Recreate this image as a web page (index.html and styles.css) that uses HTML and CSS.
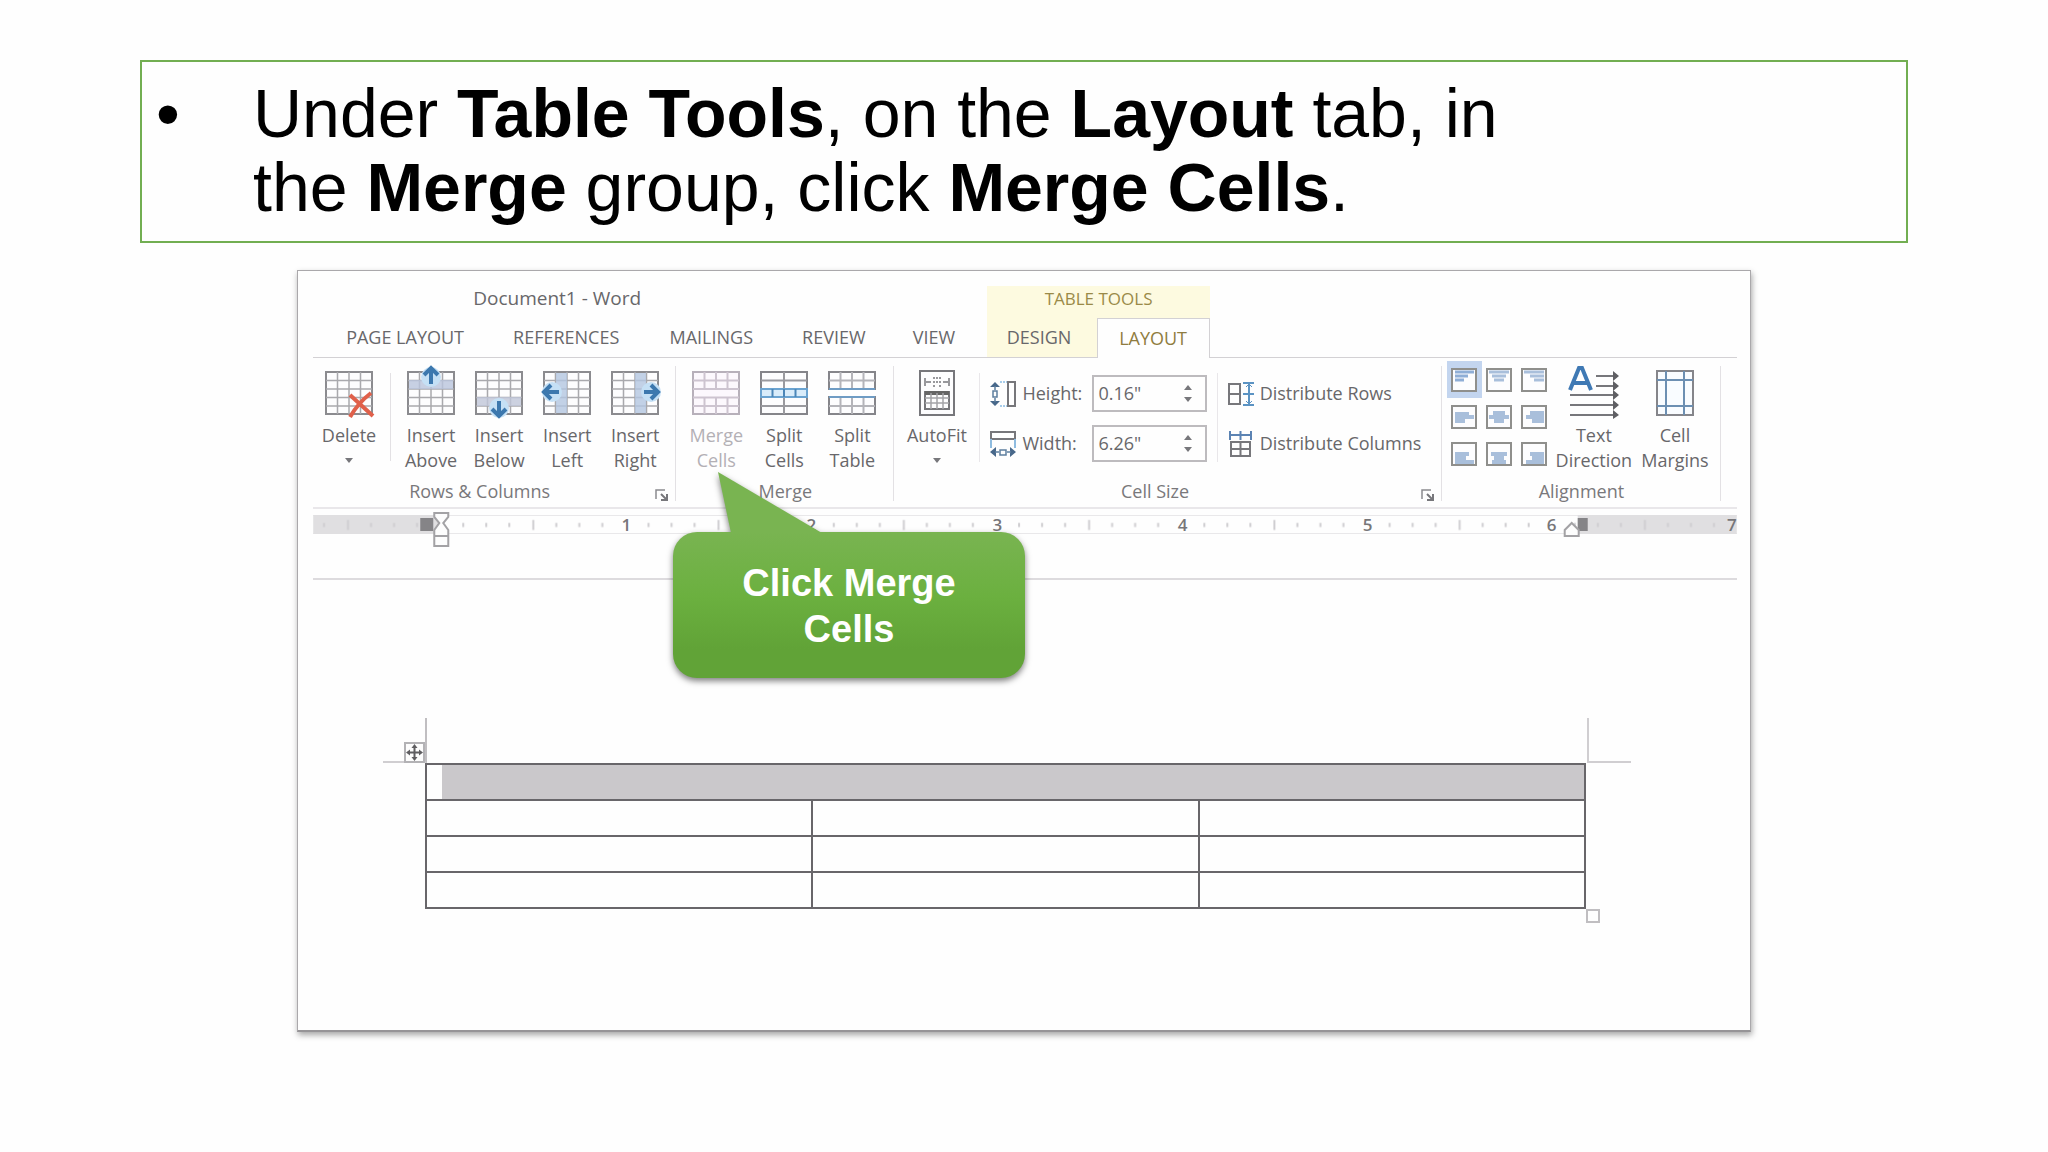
FILE: index.html
```html
<!DOCTYPE html>
<html lang="en">
<head>
<meta charset="utf-8">
<title>Merge Cells</title>
<link rel="stylesheet" href="styles.css">
</head>
<body>
<svg class="defs" aria-hidden="true">
  <defs>
    <symbol id="grid" viewBox="0 0 54 54">
      <path d="M4 7H50V49H4Z" fill="#fdfdfe" stroke="#8b8b8f" stroke-width="2"/>
      <path d="M4 15.500H50M4 24H50M4 32.500H50M4 41H50M15.500 7V49M27 7V49M38.500 7V49" stroke="#a9a9ad" stroke-width="1.500" fill="none"/>
    </symbol>
    <symbol id="launcher" viewBox="0 0 14 14">
      <path d="M1 11V2H10" stroke="#8a8a8e" stroke-width="1.500" fill="none"/>
      <path d="M6 6L11 11M12 6V12H6" stroke="#77777b" stroke-width="2" fill="none"/>
    </symbol>
    <symbol id="spin" viewBox="0 0 10 6"><path d="M1 6L5 1L9 6Z" fill="#77777b"/></symbol>
    <symbol id="frame" viewBox="0 0 26 24"><path d="M1 1H25V23H1Z" fill="#fdfdfe" stroke="#8f8f8c" stroke-width="2"/></symbol>
  </defs>
</svg>
<main class="slide">
  <ul class="instruction">
    <li>Under <b>Table Tools</b>, on the <b>Layout</b> tab, in<br>the <b>Merge</b> group, click <b>Merge Cells</b>.</li>
  </ul>

  <section class="window">
    <nav class="tabs">
      <span class="doc-title">Document1 - Word</span>
      <span class="context-title">TABLE TOOLS</span>
      <button class="tab">PAGE LAYOUT</button>
      <button class="tab">REFERENCES</button>
      <button class="tab">MAILINGS</button>
      <button class="tab">REVIEW</button>
      <button class="tab">VIEW</button>
      <button class="tab tab-context">DESIGN</button>
      <button class="tab tab-active">LAYOUT</button>
      <span class="tab-rest"></span>
    </nav>

    <div class="ribbon">
      <section class="group">
        <div class="group-body rows-columns">
          <button class="tool">
            <svg class="icon" viewBox="0 0 54 54"><use href="#grid"/><path d="M28 30L51 51M49 28Q36 38 28 52" stroke="#e0604a" stroke-width="4" fill="none"/></svg>
            <span>Delete</span><svg class="caret" viewBox="0 0 10 6"><path d="M1 0H9L5 5Z" fill="#77777b"/></svg>
          </button>
          <span class="divider"></span>
          <button class="tool">
            <svg class="icon" viewBox="0 0 54 54"><use href="#grid"/><path d="M5 15H49V24H5Z" fill="#b9c4dc" opacity=".8"/><circle cx="27" cy="12" r="10" fill="#c5e0f5"/><path d="M27 19V4M20 10L27 3L34 10" stroke="#3c78ae" stroke-width="4" fill="none"/></svg>
            <span>Insert<br>Above</span>
          </button>
          <button class="tool">
            <svg class="icon" viewBox="0 0 54 54"><use href="#grid"/><path d="M5 32H49V41H5Z" fill="#bfc5d8" opacity=".8"/><circle cx="27" cy="43" r="10" fill="#c5e0f5"/><path d="M27 36V51M20 44L27 51L34 44" stroke="#3c78ae" stroke-width="4" fill="none"/></svg>
            <span>Insert<br>Below</span>
          </button>
          <button class="tool">
            <svg class="icon" viewBox="0 0 54 54"><use href="#grid"/><path d="M16 8H27V48H16Z" fill="#b3c6e0" opacity=".8"/><circle cx="12" cy="27" r="10" fill="#c5e0f5"/><path d="M19 27H4M11 20L4 27L11 34" stroke="#3c78ae" stroke-width="4" fill="none"/></svg>
            <span>Insert<br>Left</span>
          </button>
          <button class="tool">
            <svg class="icon" viewBox="0 0 54 54"><use href="#grid"/><path d="M27 8H38V48H27Z" fill="#b3c6e0" opacity=".8"/><circle cx="43" cy="27" r="10" fill="#c5e0f5"/><path d="M36 27H51M43 20L50 27L43 34" stroke="#3c78ae" stroke-width="4" fill="none"/></svg>
            <span>Insert<br>Right</span>
          </button>
        </div>
        <h2 class="group-label label-left">Rows &amp; Columns</h2>
        <button class="launch" aria-label="Table properties"><svg viewBox="0 0 14 14"><use href="#launcher"/></svg></button>
      </section>

      <section class="group">
        <div class="group-body merge">
          <button class="tool" disabled>
            <svg class="icon" viewBox="0 0 54 54"><path d="M4 7H50V49H4Z" fill="#fcf8fd" stroke="#b7b0ba" stroke-width="2"/><path d="M4 15.500H50M4 24H50M4 32.500H50M4 41H50M15.500 7V24M27 7V24M38.500 7V24M15.500 33V49M27 33V49M38.500 33V49" stroke="#cdc4d0" stroke-width="2" fill="none"/></svg>
            <span>Merge<br>Cells</span>
          </button>
          <button class="tool">
            <svg class="icon" viewBox="0 0 54 54"><path d="M4 7H50V49H4Z" fill="#fdfdfe" stroke="#85858a" stroke-width="2"/><path d="M4 15.500H50M4 41H50M27 7V49" stroke="#9a9a9f" stroke-width="2" fill="none"/><path d="M4 24H50V32H4Z" fill="#d9ecfa" stroke="#6ba3d0" stroke-width="2"/><path d="M15.500 24V32M27 24V32M38.500 24V32" stroke="#4b86b8" stroke-width="2"/></svg>
            <span>Split<br>Cells</span>
          </button>
          <button class="tool">
            <svg class="icon" viewBox="0 0 54 54"><path d="M4 7H50V24H4ZM4 32H50V49H4Z" fill="#fdfdfe" stroke="#85858a" stroke-width="2"/><path d="M4 15.500H50M4 41H50M15.500 7V24M27 7V24M38.500 7V24M15.500 32V49M27 32V49M38.500 32V49" stroke="#b4b4b9" stroke-width="2" fill="none"/><path d="M4 24H50M4 32H50" stroke="#6f9cc4" stroke-width="2"/></svg>
            <span>Split<br>Table</span>
          </button>
        </div>
        <h2 class="group-label">Merge</h2>
      </section>

      <section class="group">
        <div class="group-body cell-size">
          <button class="tool">
            <svg class="icon" viewBox="0 0 54 54"><path d="M10 6H44V50H10Z" fill="#fdfdfe" stroke="#77777b" stroke-width="2"/><path d="M15 13V21M39 13V21M15 17H21M33 17H39M24 12V14M27 12V14M30 12V14M24 16V18M27 16V18M30 16V18M24 20V22M30 20V22" stroke="#98989c" stroke-width="2"/><path d="M15 27H39V44H15Z" fill="none" stroke="#77777b" stroke-width="2"/><path d="M15 28H39" stroke="#666" stroke-width="4"/><path d="M15 33H39M15 38H39M21 28V44M27 28V44M33 28V44" stroke="#a4a4a8" stroke-width="1.500"/></svg>
            <span>AutoFit</span><svg class="caret" viewBox="0 0 10 6"><path d="M1 0H9L5 5Z" fill="#77777b"/></svg>
          </button>
          <div class="fields">
            <div class="field">
              <svg class="mini" viewBox="0 0 26 26"><path d="M18 1H25V25H18Z" fill="#fff" stroke="#77777b" stroke-width="2"/><path d="M10 1H17M10 25H17" stroke="#a8cdea" stroke-width="2" stroke-dasharray="2 1"/><path d="M5 1L10 6H0ZM5 25L10 20H0Z" fill="#48688a"/><path d="M5 5V9M5 17V21M3 10H7V16H3Z" stroke="#5d7f9f" stroke-width="1.500" fill="none"/></svg>
              <label for="h">Height:</label>
              <span class="spinner"><input id="h" type="text" value='0.16"'><span class="arrows"><button aria-label="Increase height"><svg viewBox="0 0 10 6"><use href="#spin"/></svg></button><button class="down" aria-label="Decrease height"><svg viewBox="0 0 10 6"><use href="#spin"/></svg></button></span></span>
            </div>
            <div class="field">
              <svg class="mini" viewBox="0 0 26 26"><path d="M1 1H25V8H1Z" fill="#fff" stroke="#77777b" stroke-width="2"/><path d="M1 8V17M25 8V17" stroke="#8fbce0" stroke-width="2"/><path d="M0 21L6 16V26ZM26 21L20 16V26Z" fill="#48688a"/><path d="M5 21H9M17 21H21M10 19H16V24H10Z" stroke="#5d7f9f" stroke-width="1.500" fill="none"/></svg>
              <label for="w">Width:</label>
              <span class="spinner"><input id="w" type="text" value='6.26"'><span class="arrows"><button aria-label="Increase width"><svg viewBox="0 0 10 6"><use href="#spin"/></svg></button><button class="down" aria-label="Decrease width"><svg viewBox="0 0 10 6"><use href="#spin"/></svg></button></span></span>
            </div>
          </div>
          <div class="fields">
            <button class="wide-tool">
              <svg class="mini" viewBox="0 0 26 26"><path d="M1 3H12V23H1ZM1 13H12" fill="none" stroke="#77777b" stroke-width="2"/><path d="M15 2H26M15 13H26M15 24H26M21 3V23" stroke="#5b93c3" stroke-width="2"/><path d="M18 6L21 3L24 6M18 20L21 23L24 20" stroke="#5b93c3" fill="none"/></svg>
              Distribute Rows
            </button>
            <button class="wide-tool">
              <svg class="mini" viewBox="0 0 26 26"><path d="M3 11H22V25H3ZM3 18H22M12.500 11V25" fill="none" stroke="#77777b" stroke-width="2"/><path d="M2 0V9M12.500 0V9M23 0V9M2 4H23" stroke="#5b83b3" stroke-width="2"/></svg>
              Distribute Columns
            </button>
          </div>
        </div>
        <h2 class="group-label label-size">Cell Size</h2>
        <button class="launch" aria-label="Cell size options"><svg viewBox="0 0 14 14"><use href="#launcher"/></svg></button>
      </section>

      <section class="group">
        <div class="group-body alignment">
          <div class="align-grid">
            <button class="selected" aria-label="Top left"><svg viewBox="0 0 26 24"><use href="#frame"/><path d="M4 4H23M4 8H17M4 12H13" stroke="#8faed6" stroke-width="3"/></svg></button>
            <button aria-label="Top center"><svg viewBox="0 0 26 24"><use href="#frame"/><path d="M3 4H23M6 8H20M8 12H18" stroke="#a9bfdb" stroke-width="3"/></svg></button>
            <button aria-label="Top right"><svg viewBox="0 0 26 24"><use href="#frame"/><path d="M3 4H23M9 8H23M13 12H23" stroke="#a9bfdb" stroke-width="3"/></svg></button>
            <button aria-label="Middle left"><svg viewBox="0 0 26 24"><use href="#frame"/><path d="M4 9H18M4 12H23M4 16H14" stroke="#a9bfdb" stroke-width="4"/></svg></button>
            <button aria-label="Middle center"><svg viewBox="0 0 26 24"><use href="#frame"/><path d="M7 8H19M3 12H23M8 16H18" stroke="#a9bfdb" stroke-width="4"/></svg></button>
            <button aria-label="Middle right"><svg viewBox="0 0 26 24"><use href="#frame"/><path d="M9 8H23M5 12H23M11 16H23" stroke="#a9bfdb" stroke-width="4"/></svg></button>
            <button aria-label="Bottom left"><svg viewBox="0 0 26 24"><use href="#frame"/><path d="M4 12H18M4 16H15M4 20H23" stroke="#a9bfdb" stroke-width="4"/></svg></button>
            <button aria-label="Bottom center"><svg viewBox="0 0 26 24"><use href="#frame"/><path d="M5 12H21M8 16H18M6 20H20" stroke="#a9bfdb" stroke-width="4"/></svg></button>
            <button aria-label="Bottom right"><svg viewBox="0 0 26 24"><use href="#frame"/><path d="M9 12H23M11 16H23M5 20H23" stroke="#a9bfdb" stroke-width="4"/></svg></button>
          </div>
          <button class="tool">
            <svg class="icon" viewBox="0 0 54 54"><path d="M3 25L12 3H15L24 25M7 18H20" stroke="#3f79b4" stroke-width="4" fill="none"/><path d="M29 11H48M29 21H48M3 30H48M3 40H48M3 50H48" stroke="#77777b" stroke-width="2"/><path d="M46 6L52 11L46 16ZM46 16L52 21L46 26ZM46 25L52 30L46 35ZM46 35L52 40L46 45ZM46 45L52 50L46 54Z" fill="#5f5f63"/></svg>
            <span>Text<br>Direction</span>
          </button>
          <button class="tool">
            <svg class="icon" viewBox="0 0 54 54"><path d="M9 6H45V50H9Z" fill="#f9fcff" stroke="#85858a" stroke-width="2"/><path d="M18 6V50M36 6V50M9 15H45M9 41H45" stroke="#6c8fb2" stroke-width="2"/></svg>
            <span>Cell<br>Margins</span>
          </button>
        </div>
        <h2 class="group-label">Alignment</h2>
      </section>
      <span></span>
    </div>

    <svg class="ruler" viewBox="0 0 1423 40" role="img" aria-label="Ruler">
      <defs>
        <pattern id="ticks" x="127" y="0" width="185.200" height="40" patternUnits="userSpaceOnUse">
          <path d="M23 14V18M46 14V18M69 14V18M93 11V21M116 14V18M139 14V18M162 14V18" stroke="#cfced1" stroke-width="2"/>
        </pattern>
      </defs>
      <path d="M0 6.500H1423M0 24.500H1423" stroke="#e9e8ea"/>
      <path d="M0 6H127V25H0ZM1264 6H1423V25H1264Z" fill="#e0dfe1"/>
      <path d="M0 6H1423V25H0Z" fill="url(#ticks)"/>
      <path d="M107 9H120V22H107ZM1264 9H1274V22H1264Z" fill="#858487"/>
      <path d="M121 4H135V8L130 14L135 21V37H121V21L126 14L121 8ZM121 27H135" fill="#fdfdfd" stroke="#a3a2a5" stroke-width="2"/>
      <path d="M1251 27V21L1258 14L1265 21V27Z" fill="#fdfdfd" stroke="#a3a2a5" stroke-width="2"/>
      <g class="numbers"><text x="313" y="22">1</text><text x="498" y="22">2</text><text x="684" y="22">3</text><text x="869" y="22">4</text><text x="1054" y="22">5</text><text x="1238" y="22">6</text><text x="1418" y="22">7</text></g>
    </svg>

    <div class="page">
      <div class="table-wrap">
        <span class="crop crop-left"></span>
        <span class="crop crop-right"></span>
        <svg class="move" viewBox="0 0 21 21"><path d="M1 1H20V20H1Z" fill="#fdfdfd" stroke="#b3b2b5" stroke-width="2"/><path d="M10.500 4V17M4 10.500H17" stroke="#5f5e61" stroke-width="2"/><path d="M10.500 2L13.500 6H7.500ZM10.500 19L13.500 15H7.500ZM2 10.500L6 7.500V13.500ZM19 10.500L15 7.500V13.500Z" fill="#5f5e61"/></svg>
        <table class="doc-table">
          <tr><td class="merged" colspan="3"></td></tr>
          <tr><td></td><td></td><td></td></tr>
          <tr><td></td><td></td><td></td></tr>
          <tr><td></td><td></td><td></td></tr>
        </table>
        <span class="resize"></span>
      </div>
    </div>

    <p class="callout">Click Merge<br>Cells</p>
  </section>
</main>
</body>
</html>
```
FILE: styles.css
```css
* { box-sizing: border-box; }

body {
  margin: 0;
  background: #fefefe;
  color: #000;
  font-family: "Liberation Sans", Arial, sans-serif;
}

button {
  margin: 0;
  padding: 0;
  border: 0;
  background: none;
  color: inherit;
  font: inherit;
}

svg { display: block; flex: none; }

.defs { position: absolute; width: 0; height: 0; }

.slide { padding: 60px 140px; }

.instruction {
  margin: 0;
  padding: 14px 14px 17px;
  border: 2px solid #72ae52;
  list-style: none;
  font-size: 68px;
  line-height: 74px;
}

.instruction li { display: flow-root; padding-left: 97px; }

.instruction li::before {
  content: "•";
  float: left;
  width: 97px;
  margin-left: -97px;
}

/* Word window */
.window {
  position: relative;
  margin: 27px 157px 0;
  padding: 15px 13px 0 15px;
  border: 1px solid #aaa8ab;
  border-bottom: 2px solid #969497;
  background: #fefefe;
  box-shadow: 1px 3px 6px #00000059;
  color: #68676a;
  font-family: "Open Sans", "Noto Sans", sans-serif;
  font-size: 18px;
  line-height: 25px;
}

.tabs {
  display: grid;
  grid-template-columns: 184fr 138fr 152fr 93fr 107fr 109fr 113fr 527fr;
  grid-template-rows: 32px 40px;
}

.doc-title {
  grid-column: 1 / 4;
  padding-left: 14px;
  font-size: 19px;
  text-align: center;
}

.context-title {
  grid-column: 6 / 8;
  background: #fdfae0;
  color: #9a8a48;
  font-size: 17px;
  text-align: center;
}

.tab {
  grid-row: 2;
  border-bottom: 1px solid #d3d1d4;
  white-space: nowrap;
}

.tab-context { padding-right: 6px; background: #fdfae0; }

.tab-active {
  border: 1px solid #d3d1d4;
  border-bottom: 0;
  background: #fefefe;
  color: #8f7c40;
}

.tab-rest { grid-row: 2; border-bottom: 1px solid #d3d1d4; }

.ribbon {
  display: grid;
  grid-template-columns: 363fr 218fr 547fr 279fr 16fr;
  border-bottom: 2px solid #e9e7ea;
}

.group { position: relative; min-width: 0; padding-bottom: 3px; }

.group::after {
  content: "";
  position: absolute;
  top: 8px;
  right: 0;
  bottom: 6px;
  width: 1px;
  background: #e3e1e4;
}

.group-body { display: grid; height: 121px; }
.rows-columns { grid-template-columns: 72fr 12fr 68fr 68fr 68fr 68fr 7fr; }
.merge { grid-template-columns: 68fr 68fr 68fr; padding: 0 8px 0 6px; }
.cell-size { grid-template-columns: 85fr 237fr 225fr; }
.alignment { grid-template-columns: 111fr 82fr 80fr 6fr; }

.divider { margin: 15px 6px 18px 0; border-right: 1px solid #e3e1e4; }

.tool {
  display: flex;
  flex-direction: column;
  align-items: center;
  padding-top: 7px;
}

.tool:disabled { color: #b3b0b5; }
.icon { width: 54px; height: 54px; margin-bottom: 4px; }
.caret { width: 10px; height: 6px; margin-top: 10px; }

.group-label {
  margin: 0;
  color: #79787b;
  font-size: 18px;
  font-weight: 400;
  line-height: 25px;
  text-align: center;
}

.label-left { padding-right: 30px; }
.label-size { padding-right: 26px; }

.launch { position: absolute; right: 7px; bottom: 5px; }
.launch svg { width: 14px; height: 14px; }

.fields {
  display: flex;
  flex-direction: column;
  gap: 13px;
  margin: 15px 0 18px;
  padding: 2px 8px 0 10px;
  border-left: 1px solid #e9e7ea;
}

.field { display: flex; align-items: center; height: 37px; gap: 6px; }
.field label { width: 64px; }
.mini { width: 26px; height: 26px; }

.spinner {
  display: flex;
  width: 115px;
  height: 37px;
  border: 2px solid #bdbbbe;
}

.spinner input {
  flex: 1;
  min-width: 0;
  padding: 0 0 0 4px;
  border: 0;
  background: none;
  color: inherit;
  font: inherit;
}

.arrows {
  display: flex;
  flex-direction: column;
  justify-content: space-evenly;
  width: 22px;
}

.arrows svg { width: 10px; height: 6px; }
.down { transform: rotate(180deg); align-self: flex-start; }

.wide-tool {
  display: flex;
  align-items: center;
  gap: 6px;
  height: 37px;
  white-space: nowrap;
}

.align-grid {
  display: grid;
  grid-template-columns: repeat(3, 35px);
  grid-template-rows: repeat(3, 37px);
  padding: 3px 0 0 5px;
}

.align-grid button { display: grid; place-items: center; }
.align-grid svg { width: 26px; height: 24px; }
.selected { background: #c3d5ef; }

.ruler { width: 100%; height: auto; }

.numbers {
  fill: #777679;
  font-size: 17px;
  font-weight: 600;
  text-anchor: middle;
}

/* Document page */
.page {
  margin-top: 29px;
  padding: 183px 151px 121px 112px;
  border-top: 2px solid #dddbde;
}

.table-wrap { position: relative; }

.doc-table {
  width: 100%;
  border-collapse: collapse;
  table-layout: fixed;
}

.doc-table td { height: 36px; padding: 0; border: 2px solid #68666a; }
.doc-table .merged { background: linear-gradient(90deg, #fefefe 15px, #cac8cb 15px); }

.crop {
  position: absolute;
  bottom: 100%;
  width: 44px;
  height: 45px;
  border-bottom: 2px solid #d0ced1;
}

.crop-left { right: calc(100% - 2px); border-right: 2px solid #c0bec1; }
.crop-right { left: calc(100% + 1px); border-left: 2px solid #d0ced1; }

.move {
  position: absolute;
  right: 100%;
  bottom: 100%;
  width: 21px;
  height: 21px;
}

.resize {
  position: absolute;
  top: 100%;
  left: 100%;
  width: 14px;
  height: 14px;
  border: 2px solid #c0bec1;
}

.callout {
  position: absolute;
  top: 261px;
  left: 375px;
  width: 352px;
  margin: 0;
  padding: 28px 0 26px;
  border-radius: 24px;
  background: linear-gradient(#79b451, #6bb03f 45%, #61a337 80%, #61a337);
  color: #fff;
  filter: drop-shadow(0 3px 3px #00000080);
  font: bold 38px/46px "Liberation Sans", Arial, sans-serif;
  text-align: center;
}

/* Pointer of the callout */
.callout::before {
  content: "";
  position: absolute;
  bottom: calc(100% - 1px);
  left: 45px;
  width: 104px;
  height: 61px;
  background: #79b451;
  clip-path: polygon(0 0, 100% 100%, 13px 100%);
}
```
